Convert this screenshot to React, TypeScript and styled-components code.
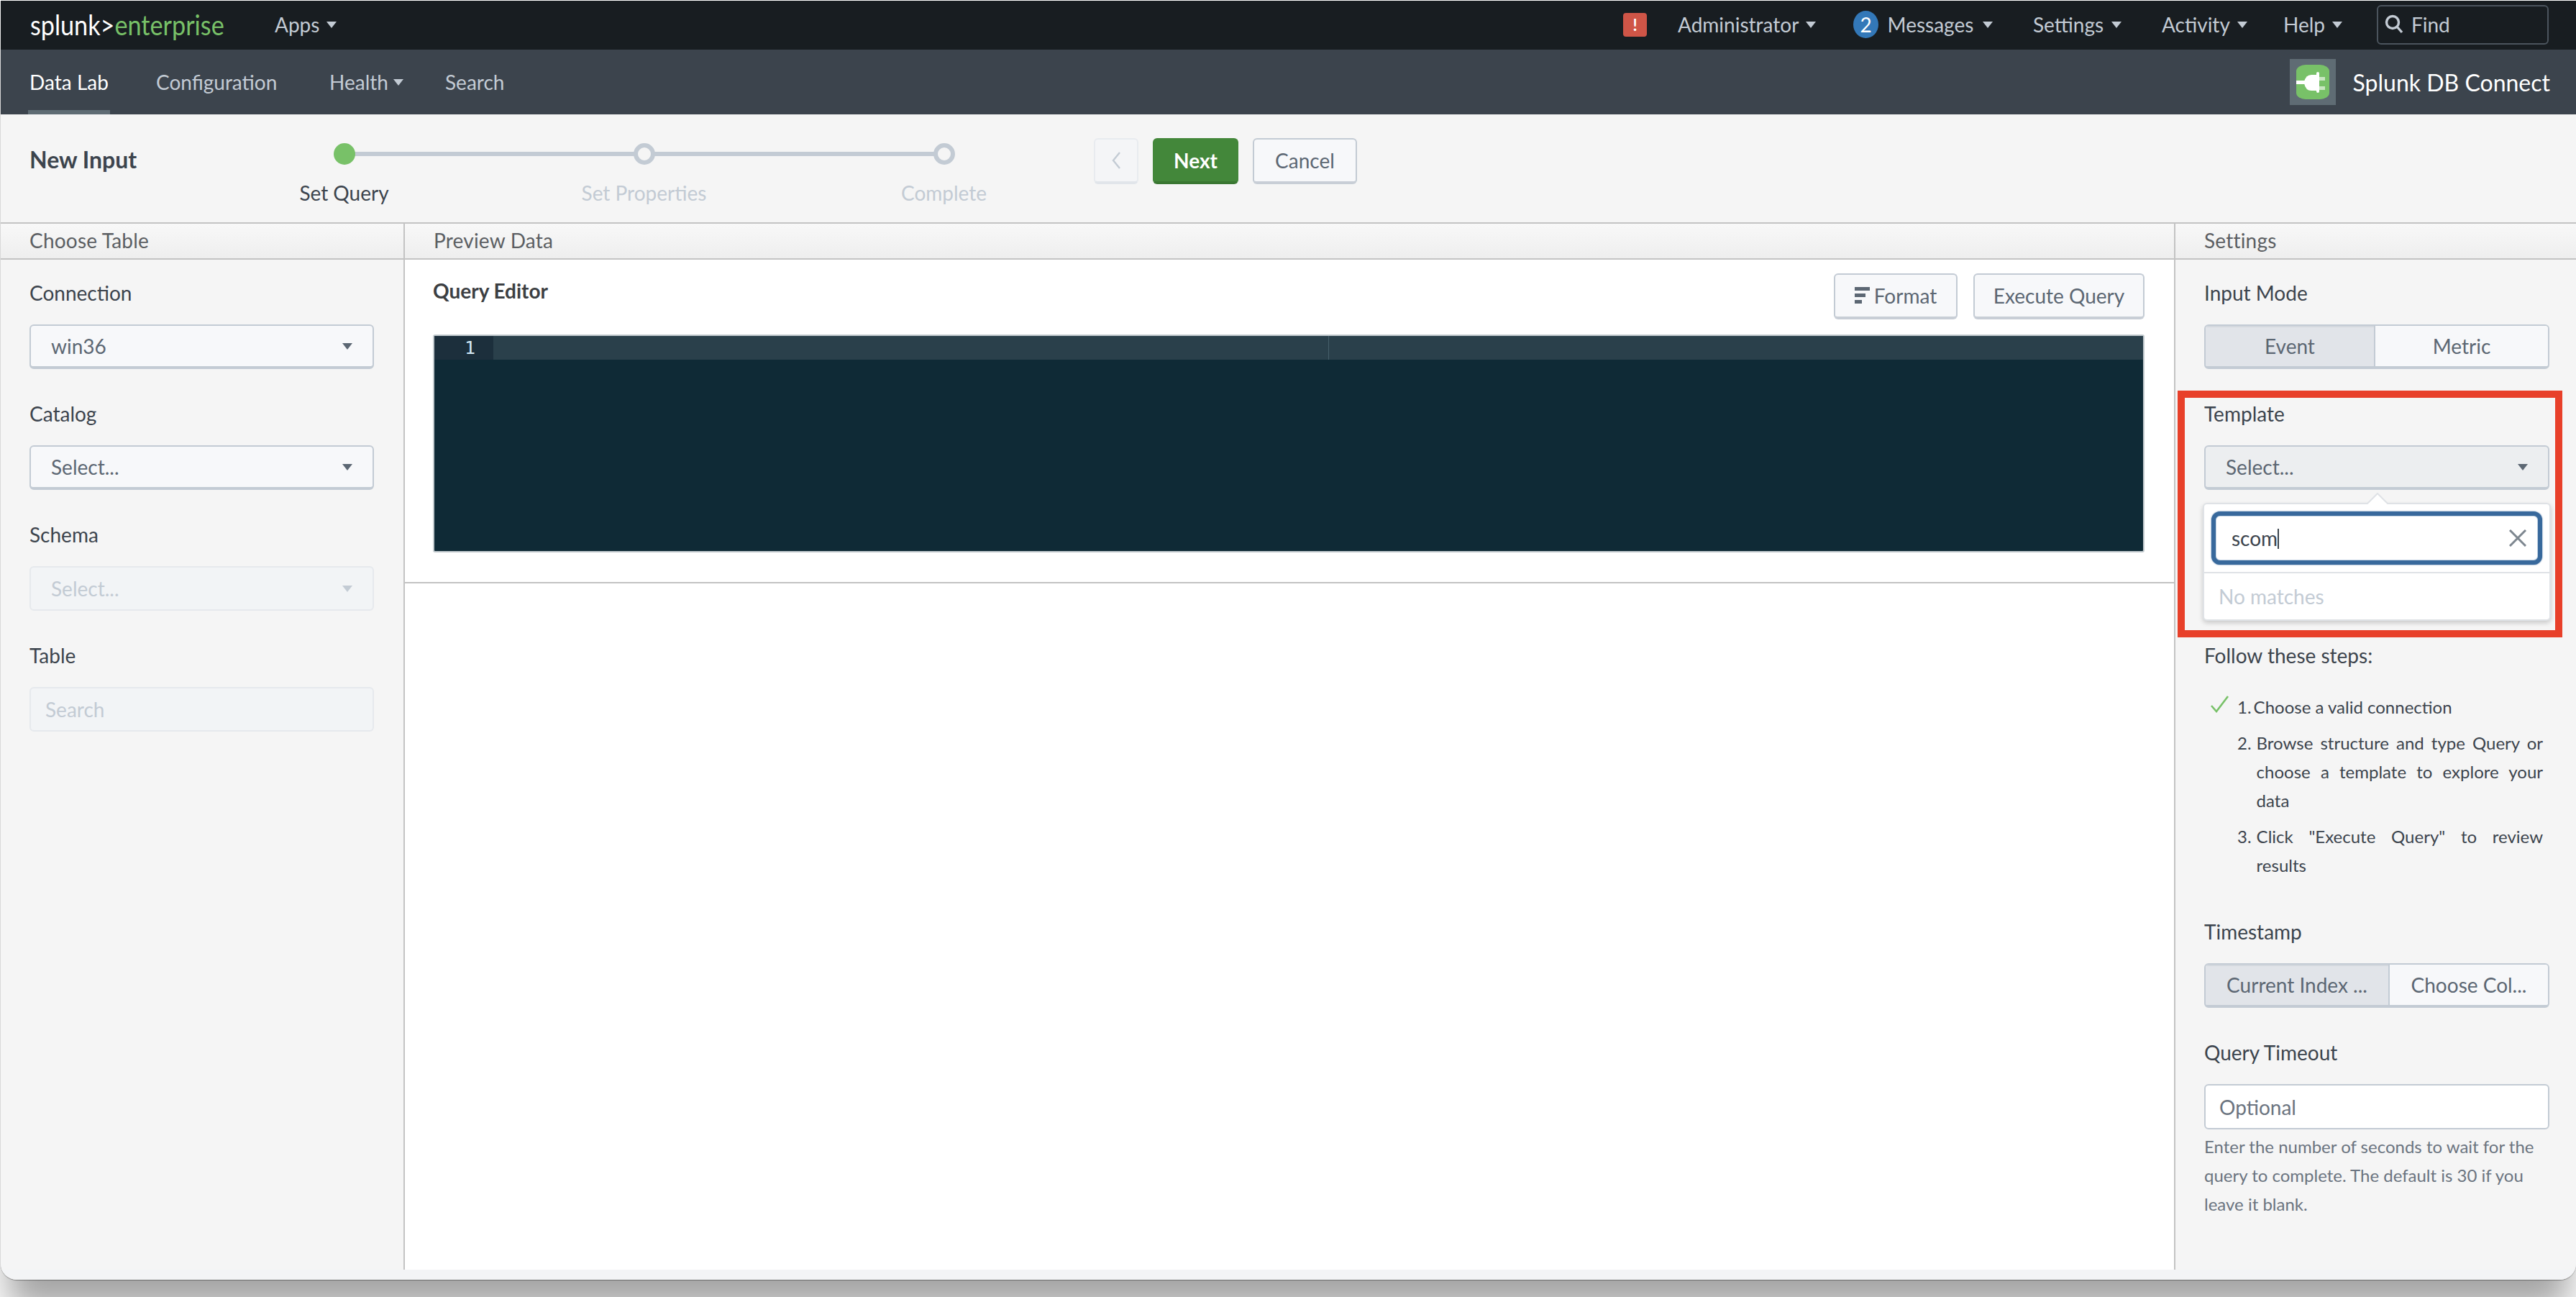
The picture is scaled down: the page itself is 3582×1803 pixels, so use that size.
import React from "react";
import styled, { createGlobalStyle } from "styled-components";

const Global = createGlobalStyle`
  html, body { margin: 0; padding: 0; background: #fff; height: 100%; overflow: hidden; }
  body { font-family: Lato, "Open Sans", sans-serif; font-size: 28px; color: #3c444d; }
  * { box-sizing: border-box; }
`;

const Page = styled.div`
  height: 1803px;
  padding: 1px 0 24px 1px;
  overflow: hidden;
`;
const Win = styled.div`
  height: 1778px;
  width: 3581px;
  display: flex;
  flex-direction: column;
  border-radius: 0 0 22px 22px;
  background: #f3f4f6;
  box-shadow: 0 1px 1px rgba(0,0,0,.35), 0 50px 50px -10px rgba(0,0,0,.36);
  overflow: hidden;
`;
const TopNav = styled.nav`
  height: 68px;
  background: #181d21;
  display: flex;
  align-items: center;
  color: #c3cbd4;
  padding: 0 38px 2px 41px;
`;
const LogoBox = styled.div`
  width: 340px;
`;
const Logo = styled.div`
  font-size: 38px;
  color: #fff;
  width: max-content;
  font-family: Lato, sans-serif;
  transform: scaleX(0.9);
  transform-origin: left center;
  b { font-weight: 400; color: #78c168; }
`;
const NavItem = styled.span<{ $w?: number }>`
  display: inline-flex;
  align-items: center;
  justify-content: space-between;
  gap: 10px;
  width: ${(p) => (p.$w ? p.$w + "px" : "auto")};
  font-size: 28px;
  color: #c3cbd4;
`;
const Caret = styled.i<{ $c?: string }>`
  display: inline-block;
  flex: none;
  width: 0;
  height: 0;
  border-left: 7px solid transparent;
  border-right: 7px solid transparent;
  border-top: 9px solid ${(p) => p.$c ?? "currentColor"};
`;
const Spacer = styled.div`flex: 1;`;
const RightNav = styled.div`
  display: flex;
  align-items: center;
  gap: 56px;
`;
const Alert = styled.span`
  width: 33px;
  height: 33px;
  border-radius: 4px;
  background: #cf5547;
  color: #fff;
  font-size: 22px;
  font-weight: 700;
  display: flex;
  align-items: center;
  justify-content: center;
  margin-right: -13px;
`;
const Badge = styled.span`
  width: 35px;
  height: 38px;
  flex: none;
  border-radius: 50%;
  background: #3378b8;
  color: #fff;
  font-size: 28px;
  display: flex;
  align-items: center;
  justify-content: center;
`;
const Find = styled.div`
  width: 239px;
  height: 55px;
  border: 2px solid #4b545d;
  border-radius: 6px;
  display: flex;
  align-items: center;
  gap: 11px;
  padding-left: 9px;
  margin-left: -7px;
  color: #c3cbd4;
`;
const AppNav = styled.nav`
  height: 90px;
  background: #3c444d;
  display: flex;
  align-items: stretch;
  padding: 0 36px 0 38px;
`;
const AppLink = styled.a<{ $active?: boolean; $w: number; $pl?: number }>`
  display: flex;
  align-items: center;
  justify-content: ${(p) => (p.$active ? "center" : "flex-start")};
  gap: 7px;
  width: ${(p) => p.$w}px;
  padding-left: ${(p) => p.$pl ?? 0}px;
  color: ${(p) => (p.$active ? "#fff" : "#c3cbd4")};
  box-shadow: ${(p) => (p.$active ? "inset 0 -6px 0 #5f6c74" : "none")};
  font-size: 28px;
`;
const AppBrand = styled.div`
  display: flex;
  align-items: center;
  gap: 24px;
  color: #fff;
  font-size: 32px;
`;
const AppIcon = styled.div`
  width: 64px;
  height: 64px;
  background: #5f6c74;
  display: flex;
  align-items: center;
  justify-content: center;
`;
const Header = styled.header`
  height: 152px;
  flex: none;
  background: #f5f5f5;
  border-bottom: 2px solid #c3c3c3;
  display: flex;
  padding-left: 40px;
`;
const Title = styled.h1`
  margin: 0;
  width: 229px;
  font-size: 32px;
  font-weight: 700;
  line-height: 40px;
  padding-top: 43px;
  color: #3c444d;
  white-space: nowrap;
`;
const Steps = styled.div`
  width: 1251px;
  display: flex;
  padding-top: 40px;
`;
const Step = styled.div`
  width: 417px;
  display: flex;
  flex-direction: column;
  align-items: center;
  position: relative;
  font-size: 28px;
`;
const StepDot = styled.div<{ $on?: boolean }>`
  width: 30px;
  height: 30px;
  border-radius: 50%;
  background: ${(p) => (p.$on ? "#78c168" : "#f5f5f5")};
  border: ${(p) => (p.$on ? "none" : "6px solid #c3cbd4")};
  position: relative;
  z-index: 1;
`;
const StepLine = styled.div`
  position: absolute;
  left: 50%;
  top: 12px;
  width: 417px;
  height: 6px;
  background: #c3cbd4;
`;
const StepLabel = styled.div<{ $on?: boolean }>`
  margin-top: 19px;
  line-height: 40px;
  color: ${(p) => (p.$on ? "#3c444d" : "#c3cbd4")};
`;
const Actions = styled.div`
  padding-top: 33px;
  display: flex;
  gap: 20px;
  align-items: flex-start;
`;
const Btn = styled.button<{ $w?: number; $kind?: "primary" | "off" }>`
  height: 64px;
  width: ${(p) => (p.$w ? p.$w + "px" : "auto")};
  padding: 0;
  font: inherit;
  font-size: 28px;
  font-weight: ${(p) => (p.$kind === "primary" ? 700 : 400)};
  border-radius: 6px;
  display: inline-flex;
  align-items: center;
  justify-content: center;
  gap: 6px;
  color: ${(p) => (p.$kind === "primary" ? "#fff" : p.$kind === "off" ? "#c3cbd4" : "#5c6773")};
  background: ${(p) => (p.$kind === "primary" ? "#43873a" : p.$kind === "off" ? "#f4f5f7" : "#f7f8fa")};
  border: 2px solid ${(p) => (p.$kind === "primary" ? "#43873a" : p.$kind === "off" ? "#e8ebef" : "#c3cbd4")};
  border-bottom-width: 4px;
  border-bottom-color: ${(p) => (p.$kind === "primary" ? "#3a7732" : p.$kind === "off" ? "#e1e5ea" : "#c8ced6")};
`;
const Body = styled.main`
  flex: 1;
  display: flex;
  min-height: 0;
`;
const Column = styled.section<{ $w?: number; $white?: boolean }>`
  ${(p) => (p.$w ? `width: ${p.$w}px; flex: none;` : "flex: 1;")}
  background: ${(p) => (p.$white ? "#fff" : "#f5f5f5")};
  display: flex;
  flex-direction: column;
  min-width: 0;
`;
const Divided = styled(Column)`
  border-right: 2px solid #c3c3c3;
`;
const PanelHead = styled.div`
  height: 50px;
  flex: none;
  border-bottom: 2px solid #c3c3c3;
  background: linear-gradient(#f8f8f8, #eeeeee);
  line-height: 46px;
  padding-left: 40px;
  font-size: 28px;
  letter-spacing: 0.2px;
  color: #5c5f63;
`;
const Form = styled.div<{ $right: number }>`
  padding: 26px ${(p) => p.$right}px 0 40px;
`;
const Label = styled.label`
  display: block;
  line-height: 40px;
  margin-bottom: 24px;
  font-size: 28px;
  color: #3c444d;
`;
const Group = styled.div<{ $gap?: number }>`
  margin-bottom: ${(p) => p.$gap ?? 42}px;
  position: relative;
`;
const Select = styled.div<{ $off?: boolean; $open?: boolean }>`
  height: 62px;
  border-radius: 6px;
  border: 2px solid ${(p) => (p.$off ? "#e6e9ed" : "#c3cbd4")};
  border-bottom-width: ${(p) => (p.$off ? 2 : 4)}px;
  background: ${(p) => (p.$off ? "#f2f4f6" : p.$open ? "#eceef0" : "#f7f8fa")};
  color: ${(p) => (p.$off ? "#c3cbd4" : "#5c6773")};
  padding: 0 28px;
  display: flex;
  align-items: center;
  justify-content: space-between;
`;
const SearchBox = styled.div`
  height: 62px;
  border-radius: 6px;
  border: 2px solid #e6e9ed;
  background: #f2f4f6;
  color: #c3cbd4;
  padding: 0 20px;
  display: flex;
  align-items: center;
`;
const Segments = styled.div`
  height: 62px;
  display: flex;
  border-radius: 6px;
  border: 2px solid #c3cbd4;
  border-bottom-width: 4px;
  overflow: hidden;
`;
const Segment = styled.div<{ $on?: boolean; $w?: number }>`
  ${(p) => (p.$w ? `width: ${p.$w}px; flex: none;` : "flex: 1;")}
  background: ${(p) => (p.$on ? "#e1e4e9" : "#f7f8fa")};
  border-right: ${(p) => (p.$on ? "2px solid #c3cbd4" : "none")};
  box-shadow: ${(p) => (p.$on ? "inset 0 2px 0 #d3d8de" : "none")};
  color: #5c6773;
  display: flex;
  align-items: center;
  justify-content: center;
`;
const Popover = styled.div`
  margin-top: 18px;
  height: 164px;
  border: 2px solid #dfe2e6;
  border-radius: 6px;
  background: #fff;
  box-shadow: 0 3px 6px rgba(0,0,0,.18);
  margin-left: -2px;
  margin-right: -2px;
  position: relative;
`;
const PopCaret = styled.svg`
  position: absolute;
  left: 226px;
  top: -16px;
`;
const PopSearch = styled.div`
  padding: 10px 10px 0;
  height: 96px;
  border-bottom: 2px solid #dfe2e6;
`;
const Focus = styled.div`
  height: 74px;
  border: 6px solid #38699c;
  border-radius: 12px;
  background: #fff;
  box-shadow: inset 0 0 0 1px #c3d3e3, 0 0 2px #38699c;
  display: flex;
  align-items: center;
  justify-content: space-between;
  padding: 0 16px 0 22px;
  color: #3c444d;
`;
const Cursor = styled.span`
  display: inline-block;
  width: 2px;
  height: 28px;
  background: #3c444d;
  vertical-align: -4px;
`;
const Empty = styled.div`
  padding-left: 20px;
  line-height: 64px;
  color: #c3cbd4;
`;
const Callout = styled.div`
  position: absolute;
  left: -37px;
  right: -18px;
  top: -12px;
  height: 343px;
  border: 10px solid #e8402a;
  pointer-events: none;
`;
const FollowTitle = styled.div`
  line-height: 40px;
  margin-bottom: 32px;
`;
const StepList = styled.ol`
  list-style: none;
  margin: 0 0 52px;
  padding: 0 9px 0 46px;
  font-size: 24px;
  line-height: 40px;
  color: #3c444d;
  display: flex;
  flex-direction: column;
  gap: 10px;
  position: relative;
`;
const StepItem = styled.li<{ $gap?: number }>`
  display: flex;
  gap: ${(p) => p.$gap ?? 7}px;
`;
const StepText = styled.span`
  flex: 1;
  text-align: justify;
`;
const Check = styled.svg`
  position: absolute;
  left: 9px;
  top: 4px;
`;
const TextInput = styled.div`
  height: 63px;
  border-radius: 6px;
  border: 2px solid #c3cbd4;
  background: #fff;
  color: #6b7480;
  padding: 0 19px;
  display: flex;
  align-items: center;
  margin-bottom: 4px;
`;
const Help = styled.p`
  margin: 0;
  font-size: 24px;
  line-height: 40px;
  color: #6b7480;
`;
const EditorHead = styled.div`
  height: 104px;
  flex: none;
  display: flex;
  justify-content: space-between;
  padding: 19px 41px 0 39px;
`;
const EditorTitle = styled.h2`
  margin: 0;
  font-size: 28px;
  font-weight: 700;
  line-height: 48px;
  color: #3c3f43;
`;
const BtnRow = styled.div`
  display: flex;
  gap: 22px;
`;
const Editor = styled.div`
  margin: 0 41px 0 39px;
  height: 303px;
  flex: none;
  background: #0f2a36;
  border: 2px solid #c3cbcf;
  border-radius: 3px;
  position: relative;
`;
const EditorLine = styled.div`
  height: 33px;
  background: #2a404b;
  display: flex;
`;
const Gutter = styled.div`
  width: 82px;
  background: #1c2f3c;
  color: #d5eaf5;
  font-family: "DejaVu Sans Mono", monospace;
  font-size: 25px;
  line-height: 33px;
  text-align: right;
  padding-right: 25px;
`;
const Margin = styled.div`
  position: absolute;
  left: 1243px;
  top: 0;
  width: 1px;
  height: 33px;
  background: #46606b;
`;
const Rule = styled.div`
  height: 2px;
  flex: none;
  background: #c3c3c3;
  margin-top: 41px;
`;
const Foot = styled.div`
  height: 14px;
  flex: none;
  background: #f3f4f6;
`;

const Steps3 = ["Set Query", "Set Properties", "Complete"];

const Choice = ({ text, off, open }: { text: string; off?: boolean; open?: boolean }) => (
  <Select $off={off} $open={open}>
    {text}
    <Caret $c={off ? "#c3cbd4" : "#5c6773"} />
  </Select>
);

export default function App() {
  return (
    <Page>
      <Global />
      <Win>
        <TopNav>
          <LogoBox><Logo>splunk&gt;<b>enterprise</b></Logo></LogoBox>
          <NavItem>Apps <Caret /></NavItem>
          <Spacer />
          <RightNav>
            <Alert>!</Alert>
            <NavItem $w={188}>Administrator<Caret /></NavItem>
            <NavItem $w={194}><Badge>2</Badge>Messages<Caret /></NavItem>
            <NavItem $w={123}>Settings<Caret /></NavItem>
            <NavItem $w={113}>Activity<Caret /></NavItem>
            <NavItem $w={81}>Help<Caret /></NavItem>
            <Find>
              <svg width="26" height="28" viewBox="0 0 26 28" fill="none" stroke="#c3cbd4" strokeWidth="3.4">
                <circle cx="11" cy="11" r="8.5" />
                <path d="M17 17l7 8" />
              </svg>
              Find
            </Find>
          </RightNav>
        </TopNav>
        <AppNav>
          <AppLink $active $w={114}>Data Lab</AppLink>
          <AppLink $w={305} $pl={64}>Configuration</AppLink>
          <AppLink $w={161}>Health<Caret /></AppLink>
          <AppLink $w={200}>Search</AppLink>
          <Spacer />
          <AppBrand>
            <AppIcon>
              <svg width="46" height="48" viewBox="0 0 46 48">
                <rect width="46" height="48" rx="13" ry="9" fill="#78c168" />
                <path d="M0 22h14v5H0z" fill="#fff" />
                <path d="M11 24q2-10 10-10h7v22h-7q-8 0-10-10z" fill="#fff" />
                <rect x="28" y="10" width="4" height="29" rx="2" fill="#fff" />
                <path d="M32 17h8v5h-8zM32 30h8v5h-8z" fill="#fff" fillOpacity=".6" />
              </svg>
            </AppIcon>
            Splunk DB Connect
          </AppBrand>
        </AppNav>
        <Header>
          <Title>New Input</Title>
          <Steps>
            {Steps3.map((s, i) => (
              <Step key={s}>
                <StepDot $on={i === 0} />
                {i < 2 && <StepLine />}
                <StepLabel $on={i === 0}>{s}</StepLabel>
              </Step>
            ))}
          </Steps>
          <Actions>
            <Btn $w={62} $kind="off">
              <svg width="14" height="26" viewBox="0 0 14 26" fill="none" stroke="#c3cbd4" strokeWidth="2.4"><path d="M12 2L3 13l9 11" /></svg>
            </Btn>
            <Btn $w={119} $kind="primary">Next</Btn>
            <Btn $w={145}>Cancel</Btn>
          </Actions>
        </Header>
        <Body>
          <Divided $w={562}>
            <PanelHead>Choose Table</PanelHead>
            <Form $right={41}>
              <Group><Label>Connection</Label><Choice text="win36" /></Group>
              <Group><Label>Catalog</Label><Choice text="Select..." /></Group>
              <Group><Label>Schema</Label><Choice text="Select..." off /></Group>
              <Group><Label>Table</Label><SearchBox>Search</SearchBox></Group>
            </Form>
          </Divided>
          <Divided $white>
            <PanelHead>Preview Data</PanelHead>
            <EditorHead>
              <EditorTitle>Query Editor</EditorTitle>
              <BtnRow>
                <Btn $w={172}>
                  <svg width="21" height="24" viewBox="0 0 21 24" fill="#5c6773"><path d="M0 0h21v5H0zM0 9h15v5H0zM0 18h10v5H0z" /></svg>
                  Format
                </Btn>
                <Btn $w={238}>Execute Query</Btn>
              </BtnRow>
            </EditorHead>
            <Editor>
              <EditorLine><Gutter>1</Gutter></EditorLine>
              <Margin />
            </Editor>
            <Rule />
          </Divided>
          <Column $w={557}>
            <PanelHead>Settings</PanelHead>
            <Form $right={37}>
              <Group>
                <Label>Input Mode</Label>
                <Segments><Segment $on $w={236}>Event</Segment><Segment>Metric</Segment></Segments>
              </Group>
              <Group $gap={28}>
                <Callout />
                <Label>Template</Label>
                <Choice text="Select..." open />
                <Popover>
                  <PopCaret width="30" height="16" viewBox="0 0 30 16">
                    <path d="M0 16L15 1l15 15" fill="#fff" stroke="#dfe2e6" strokeWidth="2" />
                  </PopCaret>
                  <PopSearch>
                    <Focus>
                      <span>scom<Cursor /></span>
                      <svg width="24" height="24" viewBox="0 0 24 24" stroke="#7d868f" strokeWidth="3" fill="none"><path d="M1 1l22 22M23 1L1 23" /></svg>
                    </Focus>
                  </PopSearch>
                  <Empty>No matches</Empty>
                </Popover>
              </Group>
              <FollowTitle>Follow these steps:</FollowTitle>
              <StepList>
                <Check width="26" height="24" viewBox="0 0 26 24" fill="none" stroke="#78c168" strokeWidth="2.6"><path d="M1 14l7 8L24 1" /></Check>
                <StepItem $gap={3}><span>1.</span><StepText>Choose a valid connection</StepText></StepItem>
                <StepItem><span>2.</span><StepText>Browse structure and type Query or choose a template to explore your data</StepText></StepItem>
                <StepItem><span>3.</span><StepText>Click "Execute Query" to review results</StepText></StepItem>
              </StepList>
              <Group>
                <Label>Timestamp</Label>
                <Segments><Segment $on $w={256}>Current Index ...</Segment><Segment>Choose Col...</Segment></Segments>
              </Group>
              <Label>Query Timeout</Label>
              <TextInput>Optional</TextInput>
              <Help>Enter the number of seconds to wait for the query to complete. The default is 30 if you leave it blank.</Help>
            </Form>
          </Column>
        </Body>
        <Foot />
      </Win>
    </Page>
  );
}
